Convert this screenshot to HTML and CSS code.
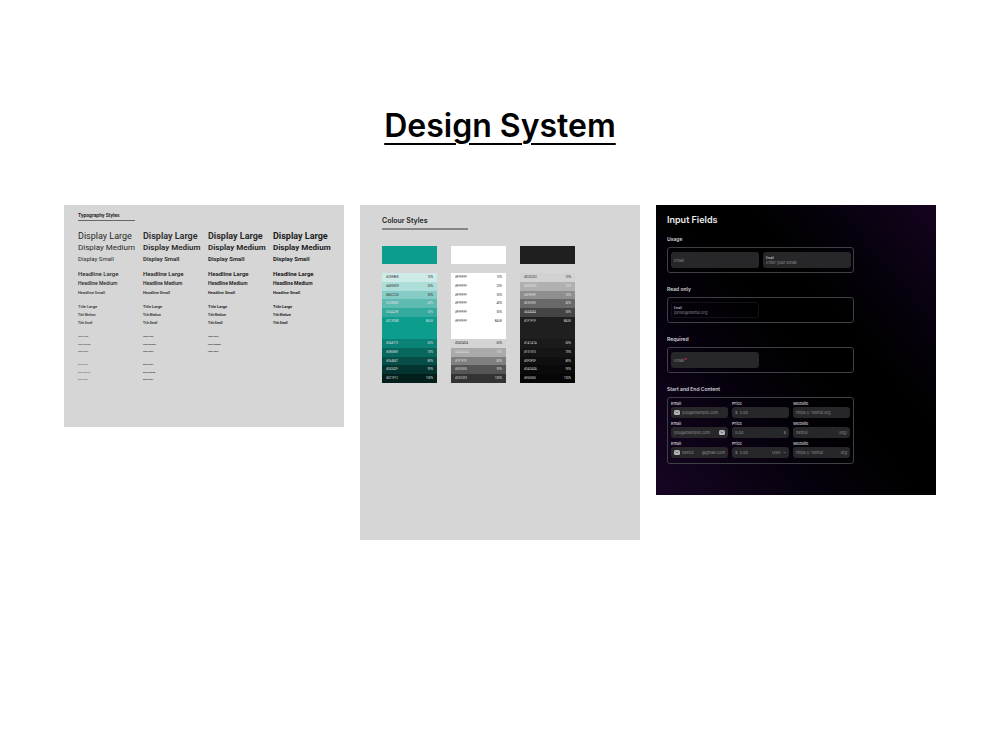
FILE: index.html
```html
<!DOCTYPE html>
<html lang="en">
<head>
<meta charset="utf-8">
<meta name="viewport" content="width=device-width, initial-scale=1">
<title>Design System</title>
<link rel="stylesheet" href="styles.css">
</head>
<body>
<main class="page">
  <h1 class="page-title">Design System</h1>
  <div class="boards">

    <section class="board board-type">
      <h2 class="type-heading">Typography Styles</h2>
      <div class="type-grid">
        <div class="type-col regular">
          <div class="type-group"><p class="display-l">Display Large</p><p class="display-m">Display Medium</p><p class="display-s">Display Small</p></div>
          <div class="type-group"><p class="headline-l">Headline Large</p><p class="headline-m">Headline Medium</p><p class="headline-s">Headline Small</p></div>
          <div class="type-group"><p class="title-l">Title Large</p><p class="title-m">Title Medium</p><p class="title-s">Title Small</p></div>
          <div class="type-group"><p class="label-l">Label Large</p><p class="label-m">Label Medium</p><p class="label-s">Label Small</p></div>
          <div class="type-group body-group"><p class="label-l">Body Large</p><p class="label-m">Body Medium</p><p class="label-s">Body Small</p></div>
        </div>
        <div class="type-col medium">
          <div class="type-group"><p class="display-l">Display Large</p><p class="display-m">Display Medium</p><p class="display-s">Display Small</p></div>
          <div class="type-group"><p class="headline-l">Headline Large</p><p class="headline-m">Headline Medium</p><p class="headline-s">Headline Small</p></div>
          <div class="type-group"><p class="title-l">Title Large</p><p class="title-m">Title Medium</p><p class="title-s">Title Small</p></div>
          <div class="type-group"><p class="label-l">Label Large</p><p class="label-m">Label Medium</p><p class="label-s">Label Small</p></div>
          <div class="type-group"><p class="label-l">Body Large</p><p class="label-m">Body Medium</p><p class="label-s">Body Small</p></div>
        </div>
        <div class="type-col semibold">
          <div class="type-group"><p class="display-l">Display Large</p><p class="display-m">Display Medium</p><p class="display-s">Display Small</p></div>
          <div class="type-group"><p class="headline-l">Headline Large</p><p class="headline-m">Headline Medium</p><p class="headline-s">Headline Small</p></div>
          <div class="type-group"><p class="title-l">Title Large</p><p class="title-m">Title Medium</p><p class="title-s">Title Small</p></div>
          <div class="type-group"><p class="label-l">Label Large</p><p class="label-m">Label Medium</p><p class="label-s">Label Small</p></div>
        </div>
        <div class="type-col bold">
          <div class="type-group"><p class="display-l">Display Large</p><p class="display-m">Display Medium</p><p class="display-s">Display Small</p></div>
          <div class="type-group"><p class="headline-l">Headline Large</p><p class="headline-m">Headline Medium</p><p class="headline-s">Headline Small</p></div>
          <div class="type-group"><p class="title-l">Title Large</p><p class="title-m">Title Medium</p><p class="title-s">Title Small</p></div>
        </div>
      </div>
    </section>

    <section class="board board-colour">
      <h2 class="colour-heading">Colour Styles</h2>
      <div class="palettes">
        <div class="palette">
          <div class="swatch teal"></div>
          <ul class="scale teal-scale">
            <li><span>#CEEBE8</span><span>10%</span></li>
            <li><span>#AEDED9</span><span>20%</span></li>
            <li><span>#86CCC6</span><span>30%</span></li>
            <li><span>#5DBBB2</span><span>40%</span></li>
            <li><span>#34AA9E</span><span>50%</span></li>
            <li><span>#0C9D8D</span><span>BASE</span></li>
            <li><span>#0A8275</span><span>60%</span></li>
            <li><span>#08685E</span><span>70%</span></li>
            <li><span>#064E47</span><span>80%</span></li>
            <li><span>#04342F</span><span>90%</span></li>
            <li><span>#021F1C</span><span>100%</span></li>
          </ul>
        </div>
        <div class="palette">
          <div class="swatch white"></div>
          <ul class="scale white-scale">
            <li><span>#FFFFFF</span><span>10%</span></li>
            <li><span>#FFFFFF</span><span>20%</span></li>
            <li><span>#FFFFFF</span><span>30%</span></li>
            <li><span>#FFFFFF</span><span>40%</span></li>
            <li><span>#FFFFFF</span><span>50%</span></li>
            <li><span>#FFFFFF</span><span>BASE</span></li>
            <li><span>#D4D4D4</span><span>60%</span></li>
            <li><span>#AAAAAA</span><span>70%</span></li>
            <li><span>#7F7F7F</span><span>80%</span></li>
            <li><span>#555555</span><span>90%</span></li>
            <li><span>#333333</span><span>100%</span></li>
          </ul>
        </div>
        <div class="palette">
          <div class="swatch black"></div>
          <ul class="scale black-scale">
            <li><span>#D2D2D2</span><span>10%</span></li>
            <li><span>#B0B0B0</span><span>20%</span></li>
            <li><span>#8F8F8F</span><span>30%</span></li>
            <li><span>#696969</span><span>40%</span></li>
            <li><span>#444444</span><span>50%</span></li>
            <li><span>#1F1F1F</span><span>BASE</span></li>
            <li><span>#1A1A1A</span><span>60%</span></li>
            <li><span>#151515</span><span>70%</span></li>
            <li><span>#0F0F0F</span><span>80%</span></li>
            <li><span>#0A0A0A</span><span>90%</span></li>
            <li><span>#060606</span><span>100%</span></li>
          </ul>
        </div>
      </div>
    </section>

    <section class="board board-input">
      <h2 class="input-heading">Input Fields</h2>
      <div class="demo">
        <h3>Usage</h3>
        <div class="frame pair">
          <div class="field"><input type="email" placeholder="Email" aria-label="Email"></div>
          <div class="field"><label for="usage-email">Email</label><input id="usage-email" type="email" placeholder="Enter your email"></div>
        </div>
      </div>
      <div class="demo">
        <h3>Read only</h3>
        <div class="frame pair">
          <div class="field outlined"><label for="ro-email">Email</label><input id="ro-email" type="email" value="junior@nextui.org" readonly></div>
        </div>
      </div>
      <div class="demo">
        <h3>Required</h3>
        <div class="frame pair">
          <div class="field required"><label for="req-email">Email<span class="star">*</span></label><input class="empty" id="req-email" type="email" required></div>
        </div>
      </div>
      <div class="demo">
        <h3>Start and End Content</h3>
        <div class="frame triple">
          <div class="item"><label for="e1">Email</label><div class="box"><svg class="mail" viewBox="0 0 24 20"><rect width="24" height="20" rx="6"/><path d="M6 7l6 4 6-4"/></svg><input id="e1" type="email" placeholder="you@example.com"></div></div>
          <div class="item"><label for="p1">Price</label><div class="box"><span>$</span><input id="p1" type="text" placeholder="0.00"></div></div>
          <div class="item"><label for="w1">Website</label><div class="box"><span>https://</span><input id="w1" type="text" placeholder="nextui.org"></div></div>

          <div class="item"><label for="e2">Email</label><div class="box"><input id="e2" type="email" placeholder="you@example.com"><svg class="mail" viewBox="0 0 24 20"><rect width="24" height="20" rx="6"/><path d="M6 7l6 4 6-4"/></svg></div></div>
          <div class="item"><label for="p2">Price</label><div class="box"><input id="p2" type="text" placeholder="0.00"><span>$</span></div></div>
          <div class="item"><label for="w2">Website</label><div class="box"><input id="w2" type="text" placeholder="nextui"><span>.org/</span></div></div>

          <div class="item"><label for="e3">Email</label><div class="box"><svg class="mail" viewBox="0 0 24 20"><rect width="24" height="20" rx="6"/><path d="M6 7l6 4 6-4"/></svg><input id="e3" type="text" placeholder="nextui"><span>@gmail.com</span></div></div>
          <div class="item"><label for="p3">Price</label><div class="box"><span>$</span><input id="p3" type="text" placeholder="0.00"><select aria-label="Currency"><option>USD</option></select><svg class="chevron" viewBox="0 0 12 12"><path d="M2 4l4 4 4-4"/></svg></div></div>
          <div class="item"><label for="w3">Website</label><div class="box"><span>https://</span><input id="w3" type="text" placeholder="nextui"><span>.org</span></div></div>
        </div>
      </div>
    </section>

  </div>
</main>
</body>
</html>
```
FILE: styles.css
```css
* { box-sizing: border-box; }
body, h1, h2, h3, p, ul { margin: 0; padding: 0; }
body { background: #fff; font-family: Inter, "Liberation Sans", sans-serif; }

.page { padding: 106px 64px 64px; }
.page-title {
  margin-bottom: 59px;
  color: #000;
  font-size: 32px;
  font-weight: 600;
  line-height: 40px;
  text-align: center;
  text-decoration: underline;
  text-decoration-thickness: 2px;
  text-underline-offset: 6px;
}
.boards { display: grid; grid-template-columns: repeat(3, 1fr); gap: 16px; align-items: start; }
.board { overflow: hidden; background: #d6d6d6; }

/* Typography */
.board-type { padding: 7px 14px 0; aspect-ratio: 280 / 222; color: #2a2a2a; font-family: Roboto, "Liberation Sans", sans-serif; }
.type-heading {
  width: 57px;
  margin-bottom: 9px;
  padding-bottom: 2px;
  border-bottom: 1px solid #666;
  font-size: 5px;
  font-weight: 700;
  line-height: 6px;
  white-space: nowrap;
}
.type-grid { display: grid; grid-template-columns: repeat(4, 65px); align-items: start; white-space: nowrap; }
.type-col { display: flex; flex-direction: column; gap: 6px; }
.display-l { font-size: 9px; line-height: 12px; }
.display-m { font-size: 8px; line-height: 12px; }
.display-s { font-size: 6px; line-height: 9px; }
.headline-l { font-size: 6px; line-height: 10px; }
.headline-m { font-size: 5px; line-height: 9px; }
.headline-s { font-size: 4px; line-height: 9px; }
.title-l { font-size: 4px; line-height: 8px; }
.title-m { font-size: 3px; line-height: 8px; }
.title-s { font-size: 3px; line-height: 8px; }
.label-l { font-size: 2px; line-height: 7px; }
.label-m { font-size: 2px; line-height: 8px; }
.label-s { font-size: 2px; line-height: 7px; }
.regular { font-weight: 400; }
.regular .headline-l, .regular .headline-m, .regular .headline-s,
.regular .title-l, .regular .title-m, .regular .title-s { font-weight: 500; }
.regular .body-group { color: #555; }
.medium { font-weight: 600; }
.semibold { font-weight: 700; }
.bold { color: #1a1a1a; font-weight: 700; }

/* Colours */
.board-colour { padding: 11px 22px 0; aspect-ratio: 280 / 335; font-family: Roboto, "Liberation Sans", sans-serif; }
.colour-heading {
  width: 86px;
  margin-bottom: 16px;
  padding-bottom: 2px;
  border-bottom: 2px solid #858585;
  color: #1f1f28;
  font-family: Inter, "Liberation Sans", sans-serif;
  font-size: 7px;
  font-weight: 600;
  line-height: 10px;
}
.palettes { display: flex; gap: 14px; }
.palette { display: flex; flex-direction: column; gap: 9px; width: 55px; }
.swatch { height: 18px; }
.teal { background: #0c9d8d; }
.white { background: #fff; }
.black { background: #1f1f1f; }
.scale {
  display: grid;
  grid-template-rows: repeat(5, 2fr) 5fr repeat(5, 2fr);
  height: 110px;
  color: #ddd;
  font-size: 3px;
  line-height: 9px;
  list-style: none;
}
.scale li { display: flex; justify-content: space-between; min-height: 0; padding: 0 4px; }
.scale li:nth-child(-n+3) { color: #333; }
.teal-scale li:nth-child(1) { background: #ceebe8; }
.teal-scale li:nth-child(2) { background: #aeded9; }
.teal-scale li:nth-child(3) { background: #86ccc6; }
.teal-scale li:nth-child(4) { background: #5dbbb2; }
.teal-scale li:nth-child(5) { background: #34aa9e; }
.teal-scale li:nth-child(6) { background: #0c9d8d; }
.teal-scale li:nth-child(7) { background: #0a8275; }
.teal-scale li:nth-child(8) { background: #08685e; }
.teal-scale li:nth-child(9) { background: #064e47; }
.teal-scale li:nth-child(10) { background: #04342f; }
.teal-scale li:nth-child(11) { background: #021f1c; }
.white-scale li { background: #fff; }
.white-scale li:nth-child(-n+7) { color: #333; }
.white-scale li:nth-child(7) { background: #d4d4d4; }
.white-scale li:nth-child(8) { background: #aaa; }
.white-scale li:nth-child(9) { background: #7f7f7f; }
.white-scale li:nth-child(10) { background: #555; }
.white-scale li:nth-child(11) { background: #333; }
.black-scale li:nth-child(1) { background: #d2d2d2; }
.black-scale li:nth-child(2) { background: #b0b0b0; color: #ddd; }
.black-scale li:nth-child(3) { background: #8f8f8f; color: #ddd; }
.black-scale li:nth-child(4) { background: #696969; }
.black-scale li:nth-child(5) { background: #444; }
.black-scale li:nth-child(6) { background: #1f1f1f; }
.black-scale li:nth-child(7) { background: #1a1a1a; }
.black-scale li:nth-child(8) { background: #151515; }
.black-scale li:nth-child(9) { background: #0f0f0f; }
.black-scale li:nth-child(10) { background: #0a0a0a; }
.black-scale li:nth-child(11) { background: #060606; }

/* Input fields */
.board-input {
  padding: 9px 11px 0;
  aspect-ratio: 280 / 290;
  background: linear-gradient(50deg, #160524 0%, #06010c 32%, #000 50%, #000 64%, #05010a 76%, #14041f 100%);
  color: #ececec;
}
.input-heading { margin-bottom: 9px; font-size: 9px; font-weight: 600; line-height: 12px; }
.demo { width: 187px; margin-bottom: 12px; }
.demo h3 { margin-bottom: 4px; color: #d4d4d8; font-size: 5px; font-weight: 600; line-height: 8px; }
.frame { border: 1px solid #3f3f46; border-radius: 3px; }
.pair { display: grid; grid-template-columns: 1fr 1fr; gap: 4px; align-items: center; min-height: 26px; padding: 0 2px 0 3px; }
.field {
  display: flex;
  flex-direction: column;
  justify-content: center;
  height: 16px;
  padding: 0 3px;
  border-radius: 3px;
  background: #27272a;
}
.field.outlined { padding: 0 2px; border: 1px solid #141218; background: none; }
.field label { color: #d4d4d8; font-size: 3px; font-weight: 500; line-height: 4px; }
.field.required { flex-direction: row; align-items: center; }
.field.required label { color: #8b8b92; font-size: 4px; font-weight: 400; line-height: 5px; }
.field.required .star { color: #f31260; font-size: 5px; font-weight: 700; }
input, select {
  min-width: 0;
  margin: 0;
  padding: 0;
  border: 0;
  outline: 0;
  background: none;
  color: #8b8b92;
  font: 400 4px/5px Inter, "Liberation Sans", sans-serif;
}
input { flex: 1 1 0; width: 100%; }
.field input { flex: none; height: 5px; }
.field.required .empty { flex: 1; }
input::placeholder { color: #8b8b92; opacity: 1; }
.triple { display: grid; grid-template-columns: repeat(3, 1fr); column-gap: 4px; row-gap: 3px; padding: 3px 3px 5px; }
.item { display: flex; flex-direction: column; gap: 1px; min-width: 0; }
.item label { color: #d4d4d8; font-size: 4px; font-weight: 500; line-height: 5px; }
.box {
  display: flex;
  gap: 2px;
  align-items: center;
  height: 11px;
  padding: 0 3px;
  border-radius: 3px;
  background: #27272a;
  color: #8b8b92;
  font-size: 4px;
  line-height: 5px;
}
.mail { flex: none; width: 6px; height: 5px; fill: #b4b4bb; stroke: #27272a; stroke-width: 2; }
.mail rect { stroke: none; }
.mail path { fill: none; }
select { flex: none; appearance: none; }
.chevron { flex: none; width: 3px; height: 3px; fill: none; stroke: #8b8b92; stroke-width: 2; }
```
